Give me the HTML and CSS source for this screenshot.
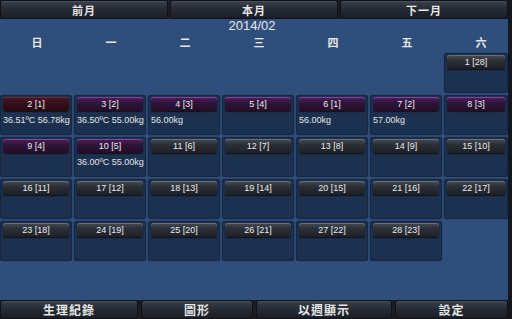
FILE: index.html
```html
<!DOCTYPE html>
<html lang="zh-Hant">
<head>
  <meta charset="UTF-8" />
  <title>生理紀錄 - 2014/02</title>
  <link rel="stylesheet" href="styles.css">
</head>
<body>

  <div class="app">
    <div class="topbar">
      <button class="bar-btn">前月</button>
      <button class="bar-btn">本月</button>
      <button class="bar-btn">下一月</button>
    </div>

    <div class="month-title">2014/02</div>

    <div class="weekdays">
      <span>日</span><span>一</span><span>二</span><span>三</span><span>四</span><span>五</span><span>六</span>
    </div>

    <div class="calendar" id="calendar"></div>

    <div class="bottombar">
      <button class="bar-btn">生理紀錄</button>
      <button class="bar-btn">圖形</button>
      <button class="bar-btn">以週顯示</button>
      <button class="bar-btn">設定</button>
    </div>
  </div>

  <script>
    // day, cycle day, pill style, note
    const days = [
      [1, 28, "", ""],
      [2, 1, "red", "36.51ºC 56.78kg"],
      [3, 2, "purple", "36.50ºC 55.00kg"],
      [4, 3, "purple", "56.00kg"],
      [5, 4, "purple", ""],
      [6, 1, "purple", "56.00kg"],
      [7, 2, "purple", "57.00kg"],
      [8, 3, "purple", ""],
      [9, 4, "purple", ""],
      [10, 5, "purple", "36.00ºC 55.00kg"]
    ];
    for (let d = 11; d <= 28; d++) days.push([d, d - 5, "", ""]);

    const cal = document.getElementById("calendar");

    // Feb 2014 starts on Saturday
    for (let i = 0; i < 6; i++) {
      const blank = document.createElement("div");
      cal.appendChild(blank);
    }

    days.forEach(([day, cycle, kind, note]) => {
      const cell = document.createElement("div");
      cell.className = "cell";
      cell.innerHTML = `
        <div class="pill ${kind}">${day} [${cycle}]</div>
        <div class="note">${note}</div>`;
      cal.appendChild(cell);
    });
  </script>

</body>
</html>
```

FILE: styles.css
```css
body {
  margin: 0;
  background: #14171d;
  font-family: "Liberation Sans", Arial, "Noto Sans CJK TC", sans-serif;
  color: #e8e8e8;
}

.app {
  width: 508px;
  height: 319px;
  background: #2f4e7b;
  display: flex;
  flex-direction: column;
  overflow: hidden;
}

.topbar {
  display: grid;
  grid-template-columns: repeat(3, 1fr);
  gap: 2px;
  background: #1a1d24;
  height: 19px;
}

.bar-btn {
  margin: 0;
  padding: 0;
  border: 1px solid #0e1117;
  border-radius: 3px;
  background: linear-gradient(#3b414c, #262b34 45%, #1a1e26);
  box-shadow: inset 0 1px 0 #4a505b;
  color: #e6e6e6;
  font-family: "Liberation Sans", "Noto Sans CJK TC", sans-serif;
  font-size: 11px;
  font-weight: bold;
  letter-spacing: 1px;
}

.month-title {
  text-align: center;
  font-size: 13px;
  height: 14px;
  line-height: 14px;
  padding-right: 4px;
}

.weekdays {
  display: grid;
  grid-template-columns: repeat(7, 74px);
  height: 20px;
  line-height: 20px;
  font-size: 11px;
  font-weight: bold;
  text-align: center;
  white-space: nowrap;
}

.calendar {
  display: grid;
  grid-template-columns: repeat(6, 72px) 1fr;
  grid-auto-rows: 40px;
  gap: 2px;
}

.cell {
  background: #1c3050;
  border: 1px solid #162742;
  border-radius: 3px;
  box-shadow: 0 0 1px #132035;
  padding: 1px 2px 0 2px;
}

.pill {
  height: 14px;
  line-height: 14px;
  border-radius: 3px;
  text-align: center;
  font-size: 9px;
  color: #ececec;
  background: linear-gradient(#474c55, #2b2f36 40%, #1d2026);
  box-shadow: inset 0 1px 0 #6a6f77, 0 1px 1px #111;
}

.pill.purple {
  background: linear-gradient(#4a2058, #2e1438 45%, #230e2b);
  box-shadow: inset 0 1px 0 #8c40a0, 0 1px 1px #111;
}

.pill.red {
  background: linear-gradient(#4c1624, #34101a 45%, #260a12);
  box-shadow: inset 0 1px 0 #7a2535, 0 1px 1px #111;
}

.note {
  font-size: 9px;
  margin-top: 4px;
  white-space: nowrap;
  color: #e4e4e4;
}

.bottombar {
  margin-top: auto;
  display: grid;
  grid-template-columns: 138px 112px 136px 1fr;
  gap: 3px;
  background: #1a1d24;
  height: 19px;
}

.bottombar .bar-btn {
  font-size: 12px;
}
```
